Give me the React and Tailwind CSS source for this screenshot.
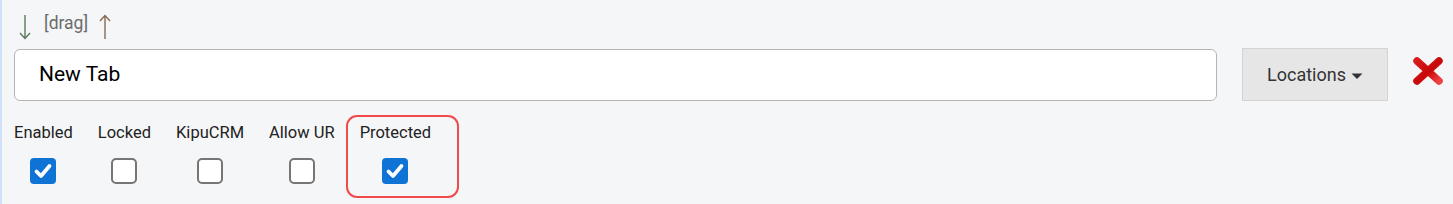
import React from "react";

function Check({ checked }) {
  if (checked) {
    return (
      <div className="w-[26px] h-[26px] rounded-[4px] bg-[#0f73d6] flex items-center justify-center">
        <svg width="20" height="20" viewBox="0 0 20 20">
          <path d="M3.5 10.5 L8 15 L16.5 5" fill="none" stroke="#fff" strokeWidth="3.8" strokeLinecap="round" strokeLinejoin="round" />
        </svg>
      </div>
    );
  }
  return <div className="w-[26px] h-[26px] rounded-[5px] bg-white border-2 border-[#767676]" />;
}

function Item({ label, checked, outlined }) {
  return (
    <div
      className={
        outlined
          ? "flex flex-col items-center pl-3 pr-[26px] pt-[6px] pb-[12px] border-2 border-[#f04a4a] rounded-[11px] ml-[-2px] mt-[-1px]"
          : "flex flex-col items-center px-3 pt-[7px] pb-[13px]"
      }
    >
      <span className="text-[16.5px] leading-[20px] text-[#222]">{label}</span>
      <div className="mt-[15px]">
        <Check checked={checked} />
      </div>
    </div>
  );
}

export default function App() {
  return (
    <div
      className="w-[1453px] h-[204px] bg-[#f5f6f8] border-l-2 border-[#cfe0fb] flex flex-col"
      style={{ fontFamily: "Roboto, 'Noto Sans', sans-serif" }}
    >
      <div className="flex items-center h-[48px] pl-[16px] pt-[6px]">
        <svg width="14" height="26" viewBox="0 0 14 26" className="mr-[12px]">
          <path d="M7 1 V24 M2 19 L7 24.5 L12 19" fill="none" stroke="#5a7a5a" strokeWidth="1.4" />
        </svg>
        <span className="text-[17.5px] text-[#6b6b6b] leading-none mb-[6px]">[drag]</span>
        <svg width="14" height="26" viewBox="0 0 14 26" className="ml-[10px]">
          <path d="M7 25 V2 M2 7 L7 1.5 L12 7" fill="none" stroke="#8a6a52" strokeWidth="1.4" />
        </svg>
      </div>
      <div className="flex items-center pl-[12px]">
        <div className="w-[1203px] h-[52px] bg-white border border-[#b5b5b5] rounded-[6px] flex items-center pl-[24px]">
          <span className="text-[21px] text-black">New Tab</span>
        </div>
        <div className="ml-[25px] w-[146px] h-[53px] bg-[#e6e6e6] border border-[#d3d3d3] flex items-center justify-center">
          <span className="text-[18px] text-[#333]">Locations</span>
          <svg width="12" height="8" viewBox="0 0 12 8" className="ml-[5px] mt-[2px]">
            <path d="M0.5 1.5 H11.5 L6 7 Z" fill="#333" />
          </svg>
        </div>
        <div className="ml-[24px] mt-[-8px]">
          <svg width="32" height="28" viewBox="0 0 32 28">
            <defs>
              <linearGradient id="xg" x1="0" y1="0" x2="1" y2="1">
                <stop offset="0" stopColor="#d81b1b" />
                <stop offset="0.55" stopColor="#c80808" />
                <stop offset="1" stopColor="#f04040" />
              </linearGradient>
            </defs>
            <path d="M5 4 L27 24 M27 4 L5 24" stroke="url(#xg)" strokeWidth="7.5" strokeLinecap="round" />
          </svg>
        </div>
      </div>
      <div className="flex items-start gap-[1px] mt-[15px]">
        <Item label="Enabled" checked />
        <Item label="Locked" />
        <Item label="KipuCRM" />
        <Item label="Allow UR" />
        <Item label="Protected" checked outlined />
      </div>
    </div>
  );
}
